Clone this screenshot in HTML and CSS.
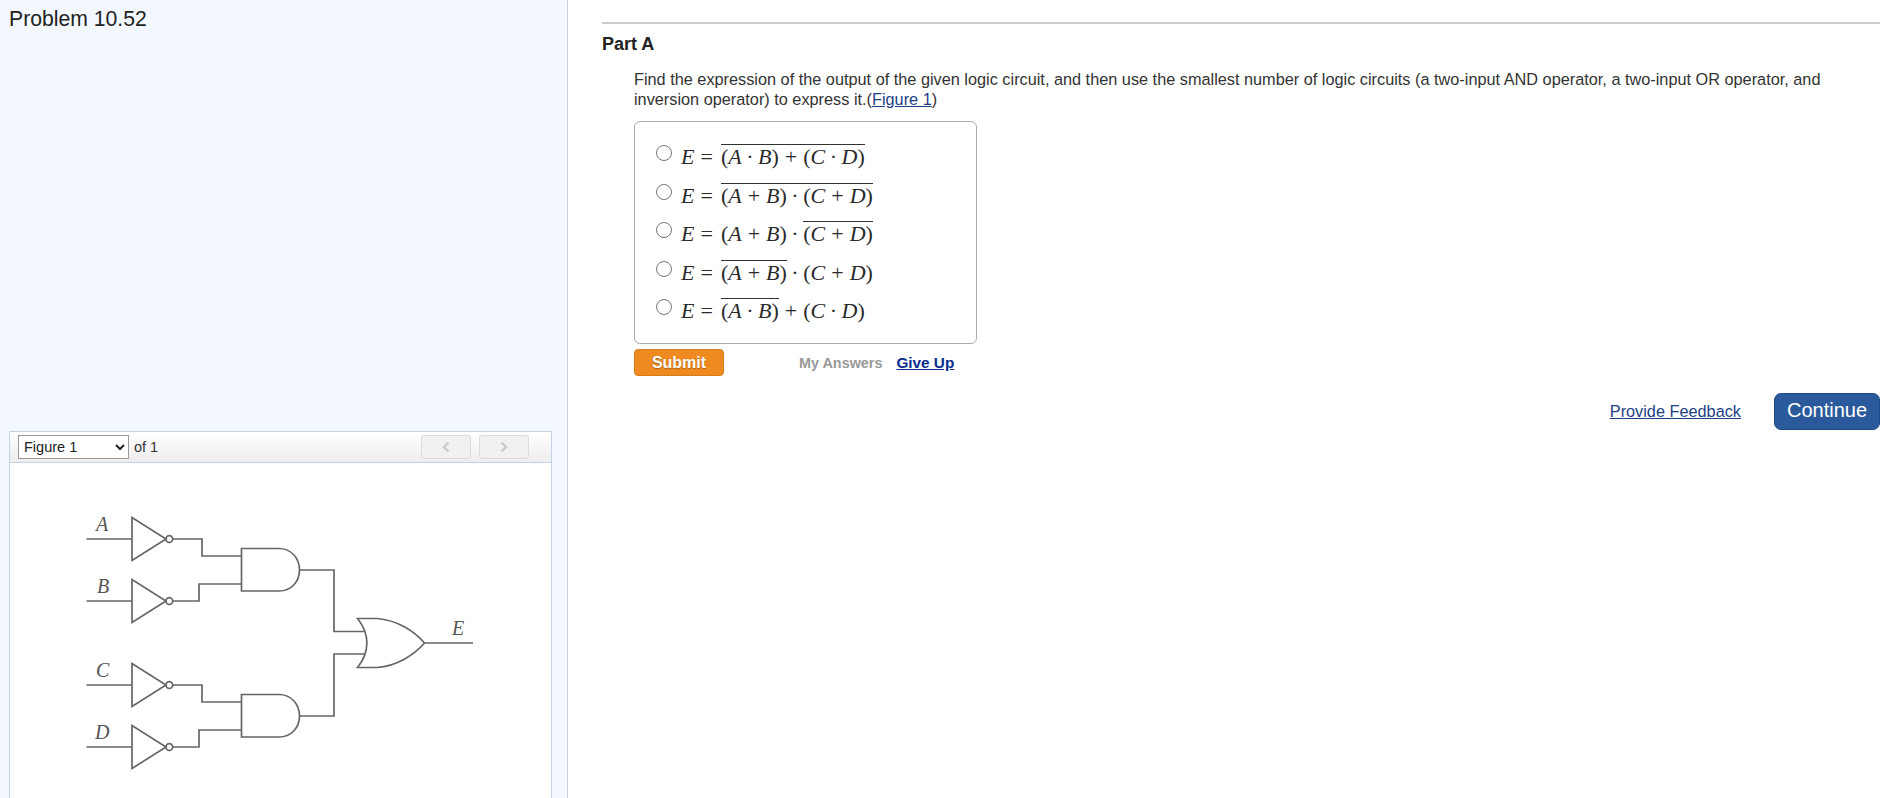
FILE: index.html
```html
<!DOCTYPE html>
<html lang="en">
<head>
  <meta charset="UTF-8" />
  <title>Problem 10.52</title>
  <link rel="stylesheet" href="styles.css">
</head>
<body>
  <div class="page">
    <aside class="sidebar">
      <h1 class="problem-title">Problem 10.52</h1>
      <div class="figure-panel">
        <div class="figure-bar">
          <select class="figure-select"><option>Figure 1</option></select>
          <span class="figure-count">of 1</span>
          <div class="figure-nav">
            <button class="nav-btn"><svg width="8" height="12" viewBox="0 0 8 12"><path d="M6.5 1.5 2 6l4.5 4.5" fill="none" stroke="#c8c8c8" stroke-width="2.2"/></svg></button>
            <button class="nav-btn"><svg width="8" height="12" viewBox="0 0 8 12"><path d="M1.5 1.5 6 6l-4.5 4.5" fill="none" stroke="#c8c8c8" stroke-width="2.2"/></svg></button>
          </div>
        </div>
        <div class="figure-body">
          <svg class="circuit" width="420" height="270" viewBox="70 505 420 270">
            <g fill="none" stroke="#666" stroke-width="1.7">
              <path d="M86.5 539H132M132 517.5V560.5L166 539ZM173 539H202V556H241.5"/>
              <circle cx="169.3" cy="539" r="3.4"/>
              <path d="M86.5 601H132M132 579.5V622.5L166 601ZM173 601H199V584H241.5"/>
              <circle cx="169.3" cy="601" r="3.4"/>
              <path d="M86.5 685H132M132 663.5V706.5L166 685ZM173 685H202V702H241.5"/>
              <circle cx="169.3" cy="685" r="3.4"/>
              <path d="M86.5 747H132M132 725.5V768.5L166 747ZM173 747H199V730H241.5"/>
              <circle cx="169.3" cy="747" r="3.4"/>
              <path d="M241.5 548.5H279C291 548.5 299.5 558 299.5 570C299.5 582 291 591 279 591H241.5Z"/>
              <path d="M241.5 694.5H279C291 694.5 299.5 704 299.5 716C299.5 728 291 737 279 737H241.5Z"/>
              <path d="M299.5 570H334V631.5H364M299.5 716H334V654H364"/>
              <path d="M357.5 618.5H377C397 620 414 631 424.5 643C414 655 397 666 377 667.5H357.5C370 652 370 634 357.5 618.5Z"/>
              <path d="M424.5 643H473"/>
            </g>
            <g class="circuit-label">
              <text x="96" y="531">A</text>
              <text x="97" y="593">B</text>
              <text x="96" y="677">C</text>
              <text x="95" y="739">D</text>
              <text x="452" y="635">E</text>
            </g>
          </svg>
        </div>
      </div>
    </aside>
    <main class="content">
      <hr class="part-rule">
      <h2 class="part-title">Part A</h2>
      <div class="question">
        <p class="question-text">Find the expression of the output of the given logic circuit, and then use the smallest number of logic circuits (a two-input AND operator, a two-input OR operator, and inversion operator) to express it.(<a href="#">Figure 1</a>)</p>
        <div class="options">
          <label class="option"><input type="radio" name="answer"><span class="math"><i>E</i><b class="eq">=</b><span class="over">(<i>A</i><s>·</s><i>B</i>)<b>+</b>(<i>C</i><s>·</s><i>D</i>)</span></span></label>
          <label class="option"><input type="radio" name="answer"><span class="math"><i>E</i><b class="eq">=</b><span class="over">(<i>A</i><b>+</b><i>B</i>)<s>·</s>(<i>C</i><b>+</b><i>D</i>)</span></span></label>
          <label class="option"><input type="radio" name="answer"><span class="math"><i>E</i><b class="eq">=</b>(<i>A</i><b>+</b><i>B</i>)<s>·</s><span class="over">(<i>C</i><b>+</b><i>D</i>)</span></span></label>
          <label class="option"><input type="radio" name="answer"><span class="math"><i>E</i><b class="eq">=</b><span class="over">(<i>A</i><b>+</b><i>B</i>)</span><s>·</s>(<i>C</i><b>+</b><i>D</i>)</span></label>
          <label class="option"><input type="radio" name="answer"><span class="math"><i>E</i><b class="eq">=</b><span class="over">(<i>A</i><s>·</s><i>B</i>)</span><b>+</b>(<i>C</i><s>·</s><i>D</i>)</span></label>
        </div>
        <div class="answer-actions">
          <button class="submit-btn">Submit</button>
          <span class="my-answers">My Answers</span>
          <a class="give-up" href="#">Give Up</a>
        </div>
      </div>
      <div class="footer-actions">
        <a class="feedback" href="#">Provide Feedback</a>
        <button class="continue-btn">Continue</button>
      </div>
    </main>
  </div>
</body>
</html>
```

FILE: styles.css
```css
html, body {
  margin: 0;
  padding: 0;
  height: 100%;
  overflow: hidden;
  background: #fff;
  color: #222;
  font-family: "Liberation Sans", Arial, sans-serif;
}

.page {
  display: flex;
  height: 798px;
}

.sidebar {
  width: 568px;
  flex: none;
  box-sizing: border-box;
  background: #f3f8fe;
  border-right: 1px solid #c9d3dd;
  padding: 7px 15px 0 9px;
  overflow: hidden;
}

.problem-title {
  margin: 0 0 401px;
  font-size: 21.2px;
  font-weight: normal;
  line-height: 23px;
  color: #222;
}

.figure-panel {
  border: 1px solid #c3d3e2;
  border-bottom: none;
  background: #fff;
  height: 400px;
}

.figure-bar {
  display: flex;
  align-items: center;
  height: 31px;
  box-sizing: border-box;
  padding: 0 22px 0 8px;
  background: linear-gradient(to bottom, #fff, #ededed);
  border-bottom: 1px solid #c3d3e2;
}

.figure-select {
  width: 111px;
  height: 24px;
  padding-left: 1px;
  background: #fff;
  border: 1px solid #9a9a9a;
  border-radius: 0;
  font-family: inherit;
  font-size: 14.5px;
  color: #222;
}

.figure-count {
  margin-left: 5px;
  font-size: 14.5px;
  color: #333;
}

.figure-nav {
  display: flex;
  gap: 8px;
  margin-left: auto;
}

.nav-btn {
  display: flex;
  align-items: center;
  justify-content: center;
  width: 50px;
  height: 24px;
  padding: 0;
  background: #f1f1f1;
  border: 1px solid #dcdcdc;
  border-radius: 3px;
}

.circuit {
  display: block;
  margin: 42px 0 0 60px;
}

.circuit-label text {
  font-family: "Liberation Serif", serif;
  font-style: italic;
  font-size: 20px;
  fill: #555;
}

.content {
  flex: 1;
  min-width: 0;
  padding: 22px 18px 0 34px;
}

.part-rule {
  height: 2px;
  margin: 0;
  border: none;
  background: #ccc;
}

.part-title {
  margin: 10px 0 0;
  font-size: 18px;
  line-height: 20px;
  font-weight: bold;
  color: #222;
}

.question {
  padding-left: 32px;
}

.question-text {
  margin: 15px 0 0;
  font-size: 16.3px;
  line-height: 20px;
  color: #333;
}

.question-text a {
  color: #1d3f85;
}

.options {
  width: 343px;
  height: 223px;
  box-sizing: border-box;
  margin-top: 12px;
  padding: 18px 21px 0;
  border: 1px solid #aaa;
  border-radius: 6px;
}

.option {
  display: flex;
  align-items: flex-start;
  height: 38.5px;
}

.option input {
  width: 16px;
  height: 16px;
  margin: 5px 9px 0 0;
  flex: none;
}

.math {
  font-family: "Liberation Serif", serif;
  font-size: 22px;
  line-height: 24px;
  margin-top: 4px;
  white-space: nowrap;
  color: #2a2a2a;
}

.math b {
  font-weight: normal;
  margin: 0 6px;
}

.math .eq {
  margin-right: 8px;
}

.math s {
  text-decoration: none;
  margin: 0 4.5px;
}

.over {
  display: inline-block;
  padding-top: 1px;
  border-top: 1px solid #333;
  line-height: 22px;
}

.answer-actions {
  display: flex;
  align-items: center;
  margin-top: 5px;
}

.submit-btn {
  width: 90px;
  height: 27px;
  padding: 0;
  background: #ee8a1f;
  border: 1px solid #d77c1b;
  border-radius: 4px;
  color: #fff;
  font-family: inherit;
  font-size: 16px;
  font-weight: bold;
  text-shadow: 0 1px 1px rgba(0,0,0,0.3);
}

.my-answers {
  margin-left: 75px;
  font-size: 14.4px;
  font-weight: bold;
  color: #999;
}

.give-up {
  margin-left: 14px;
  font-size: 15.3px;
  font-weight: bold;
  color: #0a2d8c;
}

.footer-actions {
  display: flex;
  align-items: center;
  justify-content: flex-end;
  gap: 33px;
  margin-top: 17px;
}

.feedback {
  font-size: 16.3px;
  color: #1d3f85;
}

.continue-btn {
  width: 106px;
  height: 37px;
  padding: 0 0 2px;
  background: #2a5a9c;
  border: 1px solid #1f4a85;
  border-radius: 7px;
  color: #fff;
  font-family: inherit;
  font-size: 20px;
}
```
